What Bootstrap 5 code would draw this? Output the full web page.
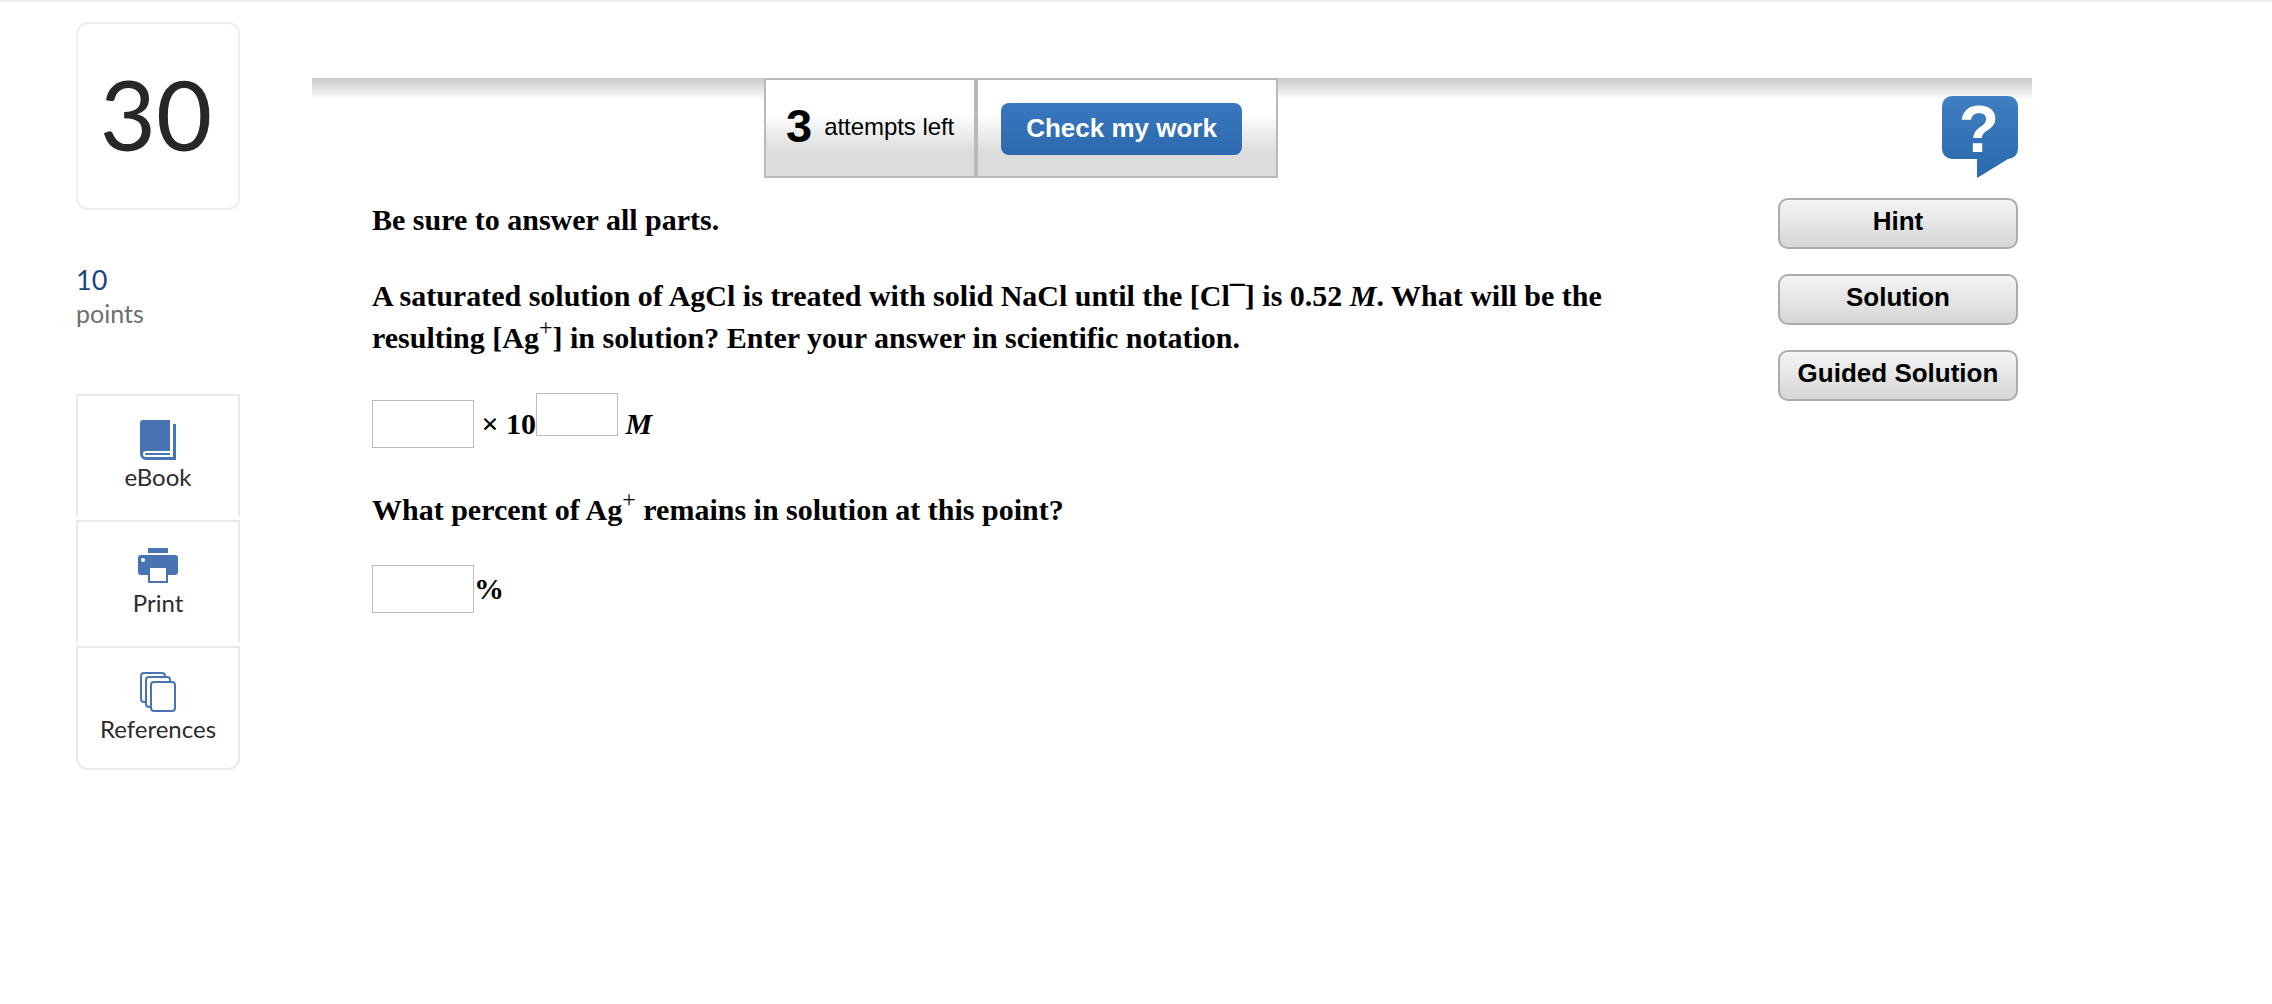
<!DOCTYPE html>
<html lang="en">
<head>
    <meta charset="UTF-8">
    <meta name="viewport" content="width=device-width, initial-scale=1.0">
    <title>Question 30</title>
    <link href="https://cdn.jsdelivr.net/npm/bootstrap@5.3.0/dist/css/bootstrap.min.css" rel="stylesheet">

    <style>
        body {
            background: #fff;
            border-top: 2px solid #eee;
        }

        .page-wrap {
            padding: 20px 0 0 76px;
        }

        .side-col {
            width: 164px;
            flex: none;
            font-family: Lato, sans-serif;
        }

        .num-box {
            height: 188px;
            border: 2px solid #eee;
            border-radius: 12px;
            color: #272727;
            font-size: 97px;
            line-height: 1;
            padding: 41px 4px 0 0;
        }

        .pts-num {
            margin-top: 53px;
            color: #1b4583;
            font-size: 27px;
            line-height: 34px;
        }

        .pts-label {
            color: #6e6e6e;
            font-size: 25px;
            line-height: 32px;
        }

        .tool-list {
            margin-top: 65px;
        }

        .tool-item {
            height: 122px;
            border: 2px solid #e9e9e9;
            border-bottom: 0;
            color: #2b2b2b;
            font-size: 24px;
            line-height: 28px;
            margin-bottom: 4px;
            padding-top: 24px;
        }

        .tool-item svg {
            display: block;
            margin: 0 auto 3px;
        }

        .tool-item:last-child {
            height: 124px;
            border-bottom: 2px solid #e9e9e9;
            border-radius: 0 0 12px 12px;
            margin-bottom: 0;
        }

        .main-col {
            width: 1720px;
            flex: none;
            margin-left: 72px;
            margin-top: 56px;
        }

        .tool-bar {
            height: 100px;
            background: linear-gradient(#c9c9c9, #fff) no-repeat 0 0 / 100% 22px;
            padding-left: 452px;
            padding-right: 14px;
        }

        .try-box {
            height: 100px;
            border: 2px solid #b9b9b9;
            background: linear-gradient(#fff 35%, #dcdcdc 75%);
            font-family: "Liberation Sans", Arial, sans-serif;
            color: #000;
        }

        .try-left {
            width: 212px;
            padding: 0 0 3px 20px;
        }

        .try-right {
            width: 302px;
            padding-left: 23px;
        }

        .try-num {
            font-size: 47px;
            font-weight: 700;
            margin-right: 12px;
        }

        .try-text {
            font-size: 24px;
            letter-spacing: -.05px;
        }

        .btn.check-btn {
            width: 241px;
            height: 52px;
            margin-top: 2px;
            padding: 0 0 2px;
            border: 0;
            border-radius: 8px;
            background: linear-gradient(#3878c0, #2d69ad);
            color: #fff;
            font: 700 26px "Liberation Sans", Arial, sans-serif;
        }

        .help-icon {
            align-self: flex-end;
        }

        .q-body {
            padding-left: 60px;
            padding-right: 14px;
        }

        .q-text {
            width: 1300px;
            padding-top: 21px;
            color: #000;
            font: 700 30px/42px "Liberation Serif", "Times New Roman", serif;
        }

        .q-text p {
            margin: 0 0 34px;
        }

        .q-text sup {
            font-size: 24px;
            line-height: 0;
            font-weight: 400;
            top: -.55em;
        }

        .q-input {
            display: inline-block;
            width: 102px;
            height: 48px;
            border: 1px solid #bbb;
            background: #fff;
            vertical-align: -14px;
        }

        .q-input.exp {
            width: 82px;
            height: 43px;
            vertical-align: -2px;
        }

        .q-text p.ans-first {
            margin-bottom: 41px;
        }

        .side-btns {
            width: 240px;
            flex: none;
            padding-top: 20px;
            gap: 25px;
        }

        .btn.side-btn {
            height: 51px;
            padding: 0 0 4px;
            border: 2px solid #acacac;
            border-radius: 10px;
            background: linear-gradient(#f4f4f4, #d6d6d6);
            color: #000;
            font: 700 26px "Liberation Sans", Arial, sans-serif;
        }
    </style>
</head>
<body>
    <div class="page-wrap d-flex">
        <div class="side-col">
            <div class="num-box text-center">30</div>
            <div class="pts-num">10</div>
            <div class="pts-label">points</div>
            <div class="tool-list">
                <div class="tool-item text-center">
                    <svg width="36" height="40" viewBox="0 0 36 40">
                        <path d="M3 0h27v31H6a3 3 0 0 0 0 6h27V4h3v36H6a6 6 0 0 1-6-6V3a3 3 0 0 1 3-3z" fill="#4874b4"/>
                        <path d="M6 33h24v2H6a1 1 0 0 1 0-2z" fill="#4874b4"/>
                    </svg>
                    eBook
                </div>
                <div class="tool-item text-center">
                    <svg width="40" height="40" viewBox="0 0 40 40">
                        <path d="M10 2h20v5H10z" fill="#4874b4"/>
                        <path d="M3 9h34a3 3 0 0 1 3 3v14a3 3 0 0 1-3 3h-7v-9H10v9H3a3 3 0 0 1-3-3V12a3 3 0 0 1 3-3z" fill="#4874b4"/>
                        <circle cx="5" cy="14" r="2" fill="#fff"/>
                        <path d="M11 21h18v15H11z" fill="#fff" stroke="#4874b4" stroke-width="2"/>
                    </svg>
                    Print
                </div>
                <div class="tool-item text-center">
                    <svg width="36" height="40" viewBox="0 0 36 40" fill="#fff" stroke="#4874b4" stroke-width="2">
                        <rect x="1" y="1" width="24" height="29" rx="3"/>
                        <rect x="6" y="5" width="24" height="30" rx="3"/>
                        <rect x="11" y="10" width="24" height="29" rx="3"/>
                    </svg>
                    References
                </div>
            </div>
        </div>

        <div class="main-col">
            <div class="tool-bar d-flex justify-content-between">
                <div class="d-flex">
                    <div class="try-box try-left d-flex align-items-center">
                        <span class="try-num">3</span><span class="try-text">attempts left</span>
                    </div>
                    <div class="try-box try-right d-flex align-items-center">
                        <button type="button" class="btn check-btn">Check my work</button>
                    </div>
                </div>
                <svg class="help-icon" width="76" height="82" viewBox="0 0 76 82">
                    <defs>
                        <linearGradient id="helpFill" x1="0" y1="0" x2="0" y2="1">
                            <stop offset="0" stop-color="#3f7fc1"/>
                            <stop offset="1" stop-color="#2b67ac"/>
                        </linearGradient>
                    </defs>
                    <path d="M10 0h56a10 10 0 0 1 10 10v43a10 10 0 0 1-10 10L35 82V63H10A10 10 0 0 1 0 53V10A10 10 0 0 1 10 0z" fill="url(#helpFill)"/>
                    <text x="37" y="56" text-anchor="middle" fill="#fff" font-family="Liberation Sans, Arial, sans-serif" font-weight="700" font-size="66">?</text>
                </svg>
            </div>

            <div class="q-body d-flex justify-content-between">
                <div class="q-text">
                    <p>Be sure to answer all parts.</p>
                    <p>A saturated solution of AgCl is treated with solid NaCl until the [Cl¯] is 0.52 <em>M</em>. What will be the resulting [Ag<sup>+</sup>] in solution? Enter your answer in scientific notation.</p>
                    <p class="ans-first"><span class="q-input"></span> × 10<span class="q-input exp"></span> <em>M</em></p>
                    <p>What percent of Ag<sup>+</sup> remains in solution at this point?</p>
                    <p><span class="q-input"></span>%</p>
                </div>
                <div class="side-btns d-flex flex-column">
                    <button type="button" class="btn side-btn">Hint</button>
                    <button type="button" class="btn side-btn">Solution</button>
                    <button type="button" class="btn side-btn">Guided Solution</button>
                </div>
            </div>
        </div>
    </div>

    <script src="https://cdn.jsdelivr.net/npm/bootstrap@5.3.0/dist/js/bootstrap.bundle.min.js"></script>
</body>
</html>
